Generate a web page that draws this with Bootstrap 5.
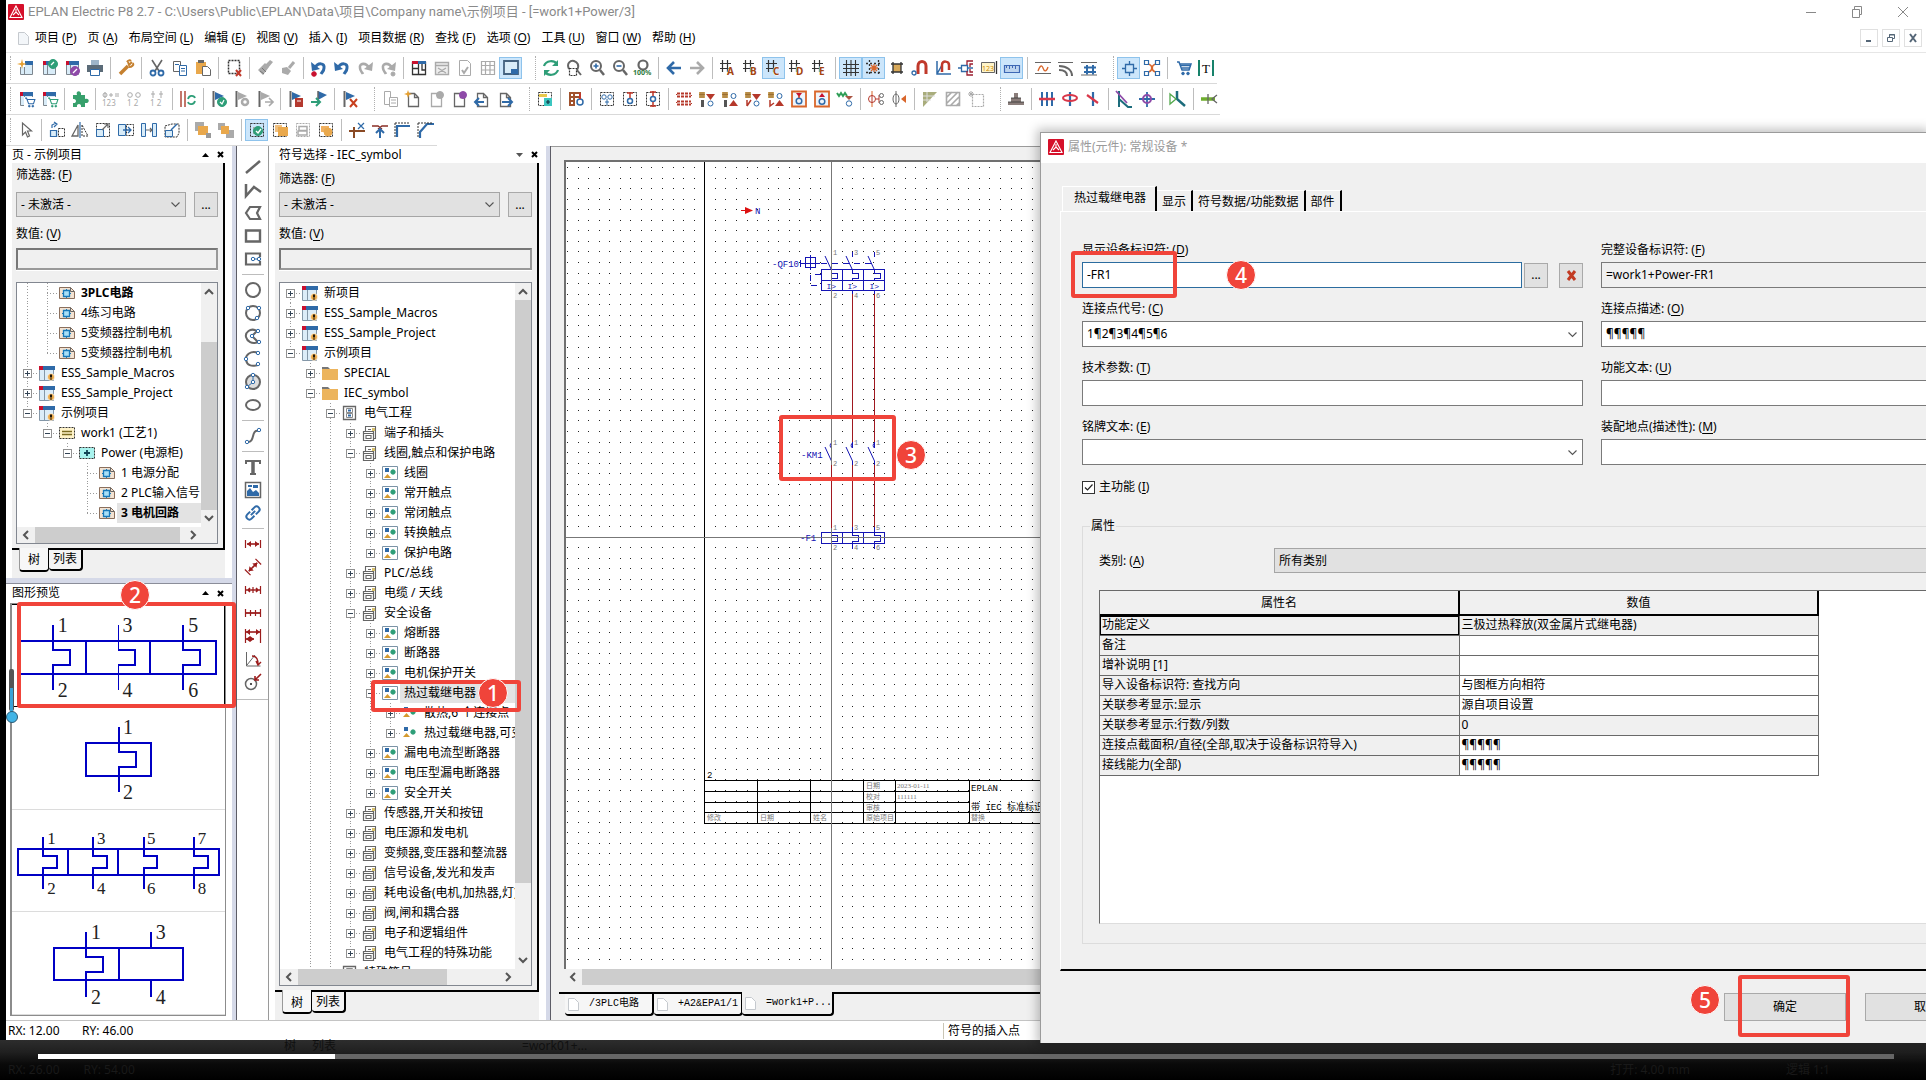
<!DOCTYPE html>
<html lang="zh-CN">
<head>
<meta charset="utf-8">
<meta name="viewport" content="width=device-width, initial-scale=1">
<title>EPLAN Electric P8 2.7</title>
<link href="https://cdn.jsdelivr.net/npm/bootstrap@5.3.0/dist/css/bootstrap.min.css" rel="stylesheet">
<style>
:root{--ui:#f0f0f0;--edge:#7a7a7a;--split:#d5d9e8;--anno:#f0443a}
body{background:#000;color:#000;font:12px/16px "Noto Sans","Noto Sans CJK SC",sans-serif;height:100vh;overflow:hidden}
u{text-underline-offset:2px}
svg{display:block;flex:none}
.app{background:#fff;margin-left:6px;min-height:0}
.titlebar{height:24px;padding-left:2px;color:#8a8a8a;font-size:13px;font-family:Roboto,"Noto Sans CJK SC",sans-serif}
.win-ctl{width:46px;height:20px;border:0;background:none;padding:0}
.menubar{height:29px;border-bottom:1px solid #e6e6e6;padding-left:10px}
.menubar a{color:#000;text-decoration:none;margin-right:11px;white-space:nowrap}
.mdi{width:18px;height:18px;border:1px solid #e0e0e0;background:#fff;padding:0}
.tools{height:31px;border-bottom:1px solid #d9d9d9;align-self:flex-start}
.grip{width:8px;height:24px;border-left:1px dotted #b0b0b0;margin-left:4px;margin-right:-4px}
.grip-next{margin-left:13px;margin-right:-4px}
.sep{width:8px;flex:none;display:flex;justify-content:center}
.sep::before{content:"";width:1px;height:22px;background:#bdbdbd}
.tool{width:23px;height:22px;border:1px solid transparent;background:none;padding:0;display:flex;align-items:center;justify-content:center;flex:none}
.tool svg{overflow:visible}
.tool.on{background:#cce6fb;border-color:#8ec3ec}
.dock-left{width:226px;flex:none}
.dock-mid{width:277px;flex:none;background:#fff}
.dock-top{flex:432 1 0;min-height:0}
.dock-low{flex:437 1 0;min-height:0}
.vsplit{width:5px;background:var(--split);border-right:1px solid #5c5c66;flex:none}
.hsplit{height:6px;background:var(--split);border-bottom:1px solid #8b8d99;flex:none}
.dock-head{height:17px;padding:0 4px 0 6px;white-space:nowrap}
.dock-head button{border:0;background:none;padding:0;width:15px;height:14px;display:flex;align-items:center;justify-content:center}
.dock-body{background:var(--ui);margin:0 7px 0 6px;border-right:2px solid #000;border-bottom:2px solid #000;padding:4px 5px 4px 4px;min-height:0}
.dock-mid .dock-body{padding-top:8px}
.dock-mid .filter-label{margin-bottom:5px}
.filter-label{margin-bottom:9px}
.value-label{margin:9px 0 6px}
.flat-select{height:25px;border:1px solid #a5a5a5;border-radius:0;background-color:#e1e1e1;font-size:12px;line-height:16px;padding:3px 20px 3px 4px;color:#000;background-position:right 4px center;background-size:11px;
 --bs-form-select-bg-img:url("data:image/svg+xml,%3csvg xmlns='http://www.w3.org/2000/svg' viewBox='0 0 11 11'%3e%3cpath d='M1.500 3.500 5.500 7.500 9.500 3.500' fill='none' stroke='%23555' stroke-width='1.100'/%3e%3c/svg%3e")}
.flat-btn{border:1px solid #a9a9a9;background:#e1e1e1;border-radius:0;padding:0;font-size:12px;line-height:16px;color:#000}
.dots-btn{width:24px;height:25px;flex:none}
.flat-input{border:1px solid var(--edge);border-radius:0;font-size:12px;line-height:16px;padding:0 4px 2px;color:#000;background:#fff;width:100%;min-width:0;display:block}
.sunken{height:22px;background:var(--ui);border:2px solid #777;border-right-color:#999;border-bottom-color:#999;box-shadow:0 1px #fff}
.tree-box{margin-top:12px;border:1px solid #828790;background:#fff;min-height:0;overflow:hidden}
.tree{overflow:hidden;min-width:0;min-height:0}
.tree ul{height:0}
.node{height:20px;white-space:nowrap}
.cell{width:20px;height:20px;flex:none}
.node-text{padding:0 4px;line-height:20px}
.node-text.sel{background:#e3e3e3;flex:1}
.vbar,.hbar{background:var(--ui);flex:none}
.vbar{width:16px}.hbar{height:16px}
.arrow-v{height:17px}.arrow-h{width:18px}
.thumb{background:#cdcdcd}
.dock-tabs{height:28px;background:var(--ui);margin:0 7px 0 6px;padding-left:7px}
.dock-tabs button{border:0;background:#f4f4f4;padding:0 4px;font-size:12px;border-right:2px solid #000;border-bottom:2px solid #000;border-radius:0 0 4px 4px;height:21px}
.dock-tabs button.cur{height:24px;width:30px;border-right-width:1px;border-left:1px solid #999;margin-top:-2px;background:#f7f7f7;padding-top:3px}
.strip{width:32px;border-right:1px solid #9a9a9a;flex:none;background:#fff}
.strip .tools-v{border-bottom:1px solid #bdbdbd;padding-top:9px;padding-bottom:6px}
.strip .tool{height:23px}
.strip .sep{width:24px;height:8px;align-items:center}
.strip .sep::before{width:22px;height:1px}
.symbols{border:1px solid #8c8c8c;border-left-width:2px;margin:0 6px 4px 4px;background:#fff;min-height:0}
.symbols li{flex:1;border-bottom:1px solid #dcdcdc;min-height:0}
.symbols li:first-child{border:1px solid #000;border-left:0}
.symbols svg{width:100%;height:100%}
.editor{background:var(--ui);border-top:1px solid #9a9a9a;min-width:0;padding:13px 0 0 13px}
.sheet{border-left:2px solid #707070;border-top:2px solid #707070;background:#fff;min-height:0}
.sheet svg{width:100%;height:100%}
.doc-tabs{height:28px;border-top:2px solid #000;margin-left:-5px;padding-left:6px;margin-top:7px;font-family:"Liberation Mono","Noto Sans CJK SC",monospace;font-size:10px}
.doc-tabs button{border:0;border-right:2px solid #000;border-bottom:2px solid #000;border-radius:0 0 4px 4px;background:#f6f6f6;height:22px;width:89px;padding:0 0 0 1px;font:inherit;color:#000;white-space:nowrap}
.doc-tabs button.cur{height:24px;width:92px;margin-top:-2px;margin-left:-1px;background:var(--ui)}
.status{height:20px;border-top:1px solid #c4c4c4;padding-left:2px}
.status .coord{width:74px}
.status .hint{border-left:1px solid #c9c5b5;padding-left:4px;margin-left:787px}
.dialog-win{position:absolute;left:1040px;right:0;top:132px;height:911px;background:var(--ui);border:1px solid #9b9b9b;border-right:0;border-bottom:0;overflow:hidden;box-shadow:0 0 10px 3px rgba(0,0,0,.25);z-index:5}
.dialog-full{width:calc(100% + 150px);height:100%}
.dlg-title{height:30px;background:#fff;color:#9a9a9a;padding:0 0 3px 7px}
.dlg-tabs{height:48px;padding-left:21px}
.dlg-tabs button{border:0;border-top:1px solid #fff;border-right:2px solid #000;background:none;padding:2px 5px 0;height:21px;font-size:12px;line-height:16px}
.dlg-tabs button.cur{height:25px;padding:0 9px 2px 11px;border-left:1px solid #fff}
.tab-page{margin-left:19px;border-left:1px solid #fff;border-top:1px solid #fff;border-bottom:2px solid #000;padding:26px 20px 25px 21px;min-height:0}
.col-a{width:501px;flex:none}
.field{margin-bottom:9px}
.field label{display:block;line-height:20px;padding-top:2px;margin-bottom:2px}
.field .flat-input,.field .flat-select{height:26px;background-color:#fff;border-color:var(--edge)}
.field .flat-input[readonly]{background:var(--ui)}
.field .flat-input.hot{border-color:#2b6c9f}
.tick{width:13px;height:13px;margin:0;border:1px solid #333;border-radius:0;appearance:none;background:#fff url("data:image/svg+xml,%3csvg xmlns='http://www.w3.org/2000/svg' viewBox='0 0 11 11'%3e%3cpath d='M2 5.500 4.500 8 9.500 2.500' fill='none' stroke='%23222' stroke-width='1.200'/%3e%3c/svg%3e") center}
.main-fn{padding-top:5px}
.props{border:1px solid #dcdcdc;padding:14px 18px 19px 16px;margin-top:23px;min-height:0;min-width:0}
.props legend{float:none;width:auto;font-size:12px;line-height:16px;margin:0 0 0 -9px;padding:0 1px}
.props-in{height:100%}
.cat-label{width:175px}
.grid-box{margin-top:17px;border:1px solid #696969;border-right-color:#ddd;border-bottom-color:#ddd;background:#fff;min-height:0}
.grid-table{width:719px;table-layout:fixed;border-collapse:collapse;line-height:16px}
.grid-table th{background:var(--ui);font-weight:400;text-align:center;height:24px;border-right:2px solid #000;border-bottom:2px solid #000;padding:0}
.grid-table td{height:20px;padding:0 2px;border:1px solid #696969;border-left:0;white-space:nowrap}
.grid-table .ro{background:var(--ui)}
.grid-table td.focus{box-shadow:inset 0 0 0 1px #000}
.dlg-foot{height:72px;padding:22px 0 0 683px}
.dlg-foot .flat-btn{width:122px;height:28px;margin-right:19px}
.player{height:40px;background:linear-gradient(#2d2d2d,#202020 12px,#0a0a0a 24px,#000);position:relative;color:#0e0e0e}
.player-track{height:5px;background:#666;margin:0 32px 0 38px}
.player-track .played{width:16%;height:5px;background:#fff}
.ghost-top{height:14px;padding-left:284px;color:#101010;line-height:12px}
.ghost-low{height:20px;padding:3px 0 0 8px;color:#191919}
.anno-box{position:absolute;border:4px solid var(--anno);border-radius:3px;z-index:8}
.anno-num{position:absolute;width:30px;height:30px;border-radius:50%;background:var(--anno);color:#fff;border:1px solid #fff;font-size:21px;line-height:28px;font-weight:500;text-align:center;z-index:9}
.b1{left:371px;top:680px;width:150px;height:32px}.n1{left:478px;top:678px}
.b2{left:17px;top:602px;width:219px;height:106px}.n2{left:120px;top:580px}
.b3{left:779px;top:415px;width:117px;height:66px}.n3{left:896px;top:440px}
.b4{left:1071px;top:251px;width:106px;height:47px}.n4{left:1226px;top:260px}
.b5{left:1738px;top:975px;width:112px;height:62px}.n5{left:1690px;top:985px}
.gauge{position:absolute;left:5px;top:668px;z-index:9}
</style>
</head>
<body class="d-flex flex-column">
<div class="app d-flex flex-column flex-grow-1">
 <header class="d-flex flex-column">
  <div class="titlebar d-flex align-items-center">
   <svg width="16" height="16" viewBox="0 0 16 16"><rect width="16" height="16" rx="1" fill="#d5102a"/><path d="M8 2 14 13.500H2zM8 5v4M5 11l3-3 3 3" fill="none" stroke="#fff" stroke-width="1.100"/></svg>
   <span class="ms-1 flex-grow-1">EPLAN Electric P8 2.7 - C:\Users\Public\EPLAN\Data\项目\Company name\示例项目 - [=work1+Power/3]</span>
   <button class="win-ctl" aria-label="最小化"><svg class="mx-auto" width="12" height="12"><path d="M1 6.500h10" stroke="#888"/></svg></button>
   <button class="win-ctl" aria-label="还原"><svg class="mx-auto" width="12" height="12" fill="none" stroke="#888"><path d="M1.500 3.500h7v8h-7zM3.500 3V.5h7v8H9"/></svg></button>
   <button class="win-ctl" aria-label="关闭"><svg class="mx-auto" width="12" height="12"><path d="m1 1 10 10M11 1 1 11" stroke="#888"/></svg></button>
  </div>
  <nav class="menubar d-flex align-items-center">
   <svg class="me-1" width="15" height="15" viewBox="0 0 15 15"><path d="M2.500 1.500h6l4 4v8h-10z" fill="#f3f6f9" stroke="#c5c9ce"/></svg>
   <a href="#">项目 (<u>P</u>)</a><a href="#">页 (<u>A</u>)</a><a href="#">布局空间 (<u>L</u>)</a><a href="#">编辑 (<u>E</u>)</a><a href="#">视图 (<u>V</u>)</a><a href="#">插入 (<u>I</u>)</a><a href="#">项目数据 (<u>R</u>)</a><a href="#">查找 (<u>F</u>)</a><a href="#">选项 (<u>O</u>)</a><a href="#">工具 (<u>U</u>)</a><a href="#">窗口 (<u>W</u>)</a><a href="#">帮助 (<u>H</u>)</a>
   <div class="ms-auto d-flex gap-1 me-1">
    <button class="mdi" aria-label="最小化文档"><svg class="mx-auto" width="10" height="10"><path d="M2 8h5" stroke="#567" stroke-width="2"/></svg></button>
    <button class="mdi" aria-label="还原文档"><svg class="mx-auto" width="10" height="10" fill="none" stroke="#567"><path d="M1.500 4.500h5v4h-5zM3.500 4V1.500h5v4H7M3 2h6"/></svg></button>
    <button class="mdi" aria-label="关闭文档"><svg class="mx-auto" width="10" height="10"><path d="m2 1 6 8M8 1 2 9" stroke="#567" stroke-width="2"/></svg></button>
   </div>
  </nav>
  <div class="tools d-flex align-items-center" data-bar="new open close print | wrench | cut copy paste | delsel | brush brush2 | undoX undo redo redoX | nav1 nav2! check tbl frame* ~ refresh zoomwin zoomin zoomout zoom100 | left right | gridA gridB gridC* gridD gridE | gridv* snap* objsnap magnet logic conn n123 ruler* | wave arcs dots4 ~ chip* net | cart txt"></div>
  <div class="tools d-flex align-items-center" data-bar="wcart wcart2 | puzzle | num1 num2 num3 | sync | flagok flaggear flagnext | flagbox flagto | flagx ~ pgcopy pgnew pggray pgvio pgin pgout ~ macro | gridred | selo seld selm | redgrid trA trB trC trD boxD boxU wavT | dev1 dev2 | tri hatch seldot ~ term | bars3 oval slash | knife node | angle | cross"></div>
  <div class="tools d-flex align-items-center" data-bar="cursor | move mirror scale copyr stretch resize | toback tofront | groupon* group ungroup grp2 | cutline addpt corner chamf"></div>
 </header>

 <main class="d-flex flex-grow-1" style="min-height:0">
  <aside class="dock-left d-flex flex-column">
   <section class="dock-top d-flex flex-column">
    <div class="dock-head d-flex align-items-center"><span class="flex-grow-1">页 - 示例项目</span><button aria-label="收起"><svg width="7" height="4"><path d="M0 4h7L3.500 0z"/></svg></button><button aria-label="关闭"><svg width="7" height="7"><path d="m1 1 5 5M6 1 1 6" stroke="#000" stroke-width="2"/></svg></button></div>
    <div class="dock-body d-flex flex-column flex-grow-1">
     <label class="filter-label" for="f1">筛选器: (<u>F</u>)</label>
     <div class="d-flex justify-content-between gap-2"><select class="form-select flat-select" id="f1"><option>- 未激活 -</option></select><button class="flat-btn dots-btn">...</button></div>
     <label class="value-label" for="v1">数值: (<u>V</u>)</label>
     <input class="flat-input sunken flex-shrink-0" id="v1">
     <div class="tree-box d-flex flex-column flex-grow-1">
      <div class="d-flex flex-grow-1" style="min-height:0"><div class="tree flex-grow-1"><ul class="list-unstyled m-0" id="pages"></ul></div>
       <div class="vbar d-flex flex-column"><svg class="arrow-v" width="16" height="17"><path d="m4 11 4-4 4 4" fill="none" stroke="#555" stroke-width="2"/></svg><div style="flex:42"></div><div class="thumb" style="flex:170"></div><svg class="arrow-v" width="16" height="17"><path d="m4 6 4 4 4-4" fill="none" stroke="#555" stroke-width="2"/></svg></div></div>
      <div class="hbar d-flex"><svg class="arrow-h" width="18" height="16"><path d="m11 4-4 4 4 4" fill="none" stroke="#555" stroke-width="2"/></svg><div class="thumb" style="flex:146"></div><svg class="arrow-h" width="26" height="16"><path d="m11 4 4 4-4 4" fill="none" stroke="#555" stroke-width="2"/></svg><div style="width:19px"></div></div>
     </div>
    </div>
    <div class="dock-tabs d-flex align-items-start"><button class="cur">树</button><button>列表</button></div>
   </section>
   <div class="hsplit"></div>
   <section class="dock-low d-flex flex-column">
    <div class="dock-head d-flex align-items-center" style="flex:0 0 19px"><span class="flex-grow-1">图形预览</span><button aria-label="收起"><svg width="7" height="4"><path d="M0 4h7L3.500 0z"/></svg></button><button aria-label="关闭"><svg width="7" height="7"><path d="m1 1 5 5M6 1 1 6" stroke="#000" stroke-width="2"/></svg></button></div>
    <ul class="symbols list-unstyled d-flex flex-column flex-grow-1" id="symbols"></ul>
   </section>
  </aside>
  <div class="vsplit"></div>
  <div class="strip"><div class="tools-v d-flex flex-column align-items-center" data-bar="line poly pgon rect rectc | circ circ3 arc1 arc2 pie ell | spline | T img link | dim1 dim2 dim3 dim4 dim5 dimA dimR"></div></div>

  <aside class="dock-mid d-flex flex-column">
   <div class="dock-head d-flex align-items-center"><span class="flex-grow-1 ms-1">符号选择 - IEC_symbol</span><button aria-label="菜单"><svg width="7" height="4"><path d="M0 0h7L3.500 4z" fill="#555"/></svg></button><button aria-label="关闭"><svg width="7" height="7"><path d="m1 1 5 5M6 1 1 6" stroke="#000" stroke-width="2"/></svg></button></div>
   <div class="dock-body d-flex flex-column flex-grow-1">
    <label class="filter-label" for="f2">筛选器: (<u>F</u>)</label>
    <div class="d-flex gap-2"><select class="form-select flat-select" id="f2"><option>- 未激活 -</option></select><button class="flat-btn dots-btn">...</button></div>
    <label class="value-label" for="v2">数值: (<u>V</u>)</label>
    <input class="flat-input sunken flex-shrink-0" id="v2">
    <div class="tree-box d-flex flex-column flex-grow-1">
     <div class="d-flex flex-grow-1" style="min-height:0"><div class="tree flex-grow-1"><ul class="list-unstyled m-0" id="syms"></ul></div>
      <div class="vbar d-flex flex-column"><svg class="arrow-v" width="16" height="17"><path d="m4 11 4-4 4 4" fill="none" stroke="#555" stroke-width="2"/></svg><div class="thumb" style="flex:585"></div><div style="flex:69"></div><svg class="arrow-v" width="16" height="17"><path d="m4 6 4 4 4-4" fill="none" stroke="#555" stroke-width="2"/></svg></div></div>
     <div class="hbar d-flex"><svg class="arrow-h" width="18" height="16"><path d="m11 4-4 4 4 4" fill="none" stroke="#555" stroke-width="2"/></svg><div class="thumb" style="flex:149"></div><div style="flex:50"></div><svg class="arrow-h" width="26" height="16"><path d="m9 4 4 4-4 4" fill="none" stroke="#555" stroke-width="2"/></svg><div style="width:16px"></div></div>
    </div>
   </div>
   <div class="dock-tabs d-flex align-items-start"><button class="cur">树</button><button>列表</button></div>
  </aside>
  <div class="vsplit"></div>

  <section class="editor d-flex flex-column flex-grow-1">
   <div class="sheet flex-grow-1"><svg id="drawing" role="img" aria-label="电机回路"></svg></div>
   <div class="hbar d-flex"><svg class="arrow-h" width="18" height="16"><path d="m11 4-4 4 4 4" fill="none" stroke="#555" stroke-width="2"/></svg><div class="thumb flex-grow-1"></div></div>
   <div class="doc-tabs d-flex align-items-start" id="docs"></div>
  </section>
 </main>
 <footer class="status d-flex align-items-center"><span class="coord">RX: 12.00</span><span class="coord">RY: 46.00</span><span class="hint">符号的插入点</span></footer>
</div>

<div class="player">
 <div class="ghost-top d-flex gap-3"><span>树</span><span>列表</span><span style="margin-left:170px">=work01+...</span></div>
 <div class="player-track"><div class="played"></div></div>
 <div class="ghost-low d-flex"><span>RX: 26.00</span><span class="ms-4 flex-grow-1">RY: 54.00</span><span class="me-5">打开: 4.00 mm</span><span class="ms-5 me-5 pe-5">逻辑 1:1</span></div>
</div>

<div class="dialog-win" role="dialog" aria-label="属性">
 <div class="dialog-full d-flex flex-column">
  <div class="dlg-title d-flex align-items-center flex-shrink-0"><svg width="16" height="16" viewBox="0 0 16 16"><rect width="16" height="16" rx="1" fill="#d5102a"/><path d="M8 2 14 13.500H2zM8 5v4M5 11l3-3 3 3" fill="none" stroke="#fff" stroke-width="1.100"/></svg><span class="ms-1">属性(元件): 常规设备 *</span></div>
  <div class="dlg-tabs d-flex align-items-end flex-shrink-0"><button class="cur">热过载继电器</button><button>显示</button><button>符号数据/功能数据</button><button>部件</button></div>
  <div class="tab-page d-flex flex-column flex-grow-1">
   <div class="d-flex" style="gap:18px">
    <div class="col-a">
     <div class="field"><label for="d1">显示设备标识符: (<u>D</u>)</label><div class="d-flex align-items-center"><input class="flat-input hot" id="d1" value="-FR1"><button class="flat-btn dots-btn" style="margin:0 11px 0 2px">...</button><button class="flat-btn dots-btn" aria-label="删除"><svg class="mx-auto" width="11" height="11"><path d="m2 1 7 9M9 1 2 10" stroke="#c23a22" stroke-width="3"/></svg></button></div></div>
     <div class="field"><label for="d2">连接点代号: (<u>C</u>)</label><select class="form-select flat-select" id="d2"><option>1¶2¶3¶4¶5¶6</option></select></div>
     <div class="field"><label for="d3">技术参数: (<u>T</u>)</label><input class="flat-input" id="d3"></div>
     <div class="field"><label for="d4">铭牌文本: (<u>E</u>)</label><select class="form-select flat-select" id="d4"><option></option></select></div>
    </div>
    <div class="flex-grow-1">
     <div class="field"><label for="e1">完整设备标识符: (<u>F</u>)</label><input class="flat-input" id="e1" readonly value="=work1+Power-FR1"></div>
     <div class="field"><label for="e2">连接点描述: (<u>O</u>)</label><input class="flat-input" id="e2" value="¶¶¶¶¶"></div>
     <div class="field"><label for="e3">功能文本: (<u>U</u>)</label><input class="flat-input" id="e3"></div>
     <div class="field"><label for="e4">装配地点(描述性): (<u>M</u>)</label><input class="flat-input" id="e4"></div>
    </div>
   </div>
   <div class="main-fn d-flex align-items-center gap-1"><input class="tick" type="checkbox" id="mf" checked><label for="mf">主功能 (<u>I</u>)</label></div>
   <fieldset class="props flex-grow-1"><legend>属性</legend>
    <div class="props-in d-flex flex-column">
     <div class="d-flex align-items-center"><label class="cat-label flex-shrink-0" for="cat">类别: (<u>A</u>)</label><select class="form-select flat-select" id="cat"><option>所有类别</option></select></div>
     <div class="grid-box flex-grow-1">
      <table class="grid-table"><thead><tr><th>属性名</th><th>数值</th></tr></thead><tbody>
       <tr><td class="ro focus">功能定义</td><td class="ro">三极过热释放(双金属片式继电器)</td></tr>
       <tr><td class="ro">备注</td><td></td></tr>
       <tr><td class="ro">增补说明 [1]</td><td></td></tr>
       <tr><td class="ro">导入设备标识符: 查找方向</td><td>与图框方向相符</td></tr>
       <tr><td class="ro">关联参考显示:显示</td><td>源自项目设置</td></tr>
       <tr><td class="ro">关联参考显示:行数/列数</td><td class="ro">0</td></tr>
       <tr><td class="ro">连接点截面积/直径(全部,取决于设备标识符导入)</td><td>¶¶¶¶¶</td></tr>
       <tr><td class="ro">接线能力(全部)</td><td>¶¶¶¶¶</td></tr>
      </tbody></table>
     </div>
    </div>
   </fieldset>
  </div>
  <div class="dlg-foot d-flex align-items-start flex-shrink-0"><button class="flat-btn">确定</button><button class="flat-btn">取消</button></div>
 </div>
</div>

<div class="anno-box b1"></div><div class="anno-num n1">1</div>
<div class="anno-box b2"></div><div class="anno-num n2">2</div>
<div class="anno-box b3"></div><div class="anno-num n3">3</div>
<div class="anno-box b4"></div><div class="anno-num n4">4</div>
<div class="anno-box b5"></div><div class="anno-num n5">5</div>
<svg class="gauge" width="14" height="58"><rect x="4" y="1" width="5" height="42" rx="2" fill="#555"/><rect x="5" y="20" width="3" height="26" fill="#3aa3d8"/><circle cx="7" cy="49" r="5.500" fill="#41b4e6" stroke="#2c5a73"/></svg>

<script src="https://cdn.jsdelivr.net/npm/bootstrap@5.3.0/dist/js/bootstrap.bundle.min.js"></script>
<script>
const G='#666',L='#aaa',B='#2f6aa8',R='#c0392b',O='#e9a84c',E='#2e9e78',K='#333',P='#8e4aa8',S='#d9ecf8';
const p=(d,s=G,w=1,f='none',x='')=>`<path d="${d}" fill="${f}" stroke="${s}" stroke-width="${w}" ${x}/>`;
const f=(d,c)=>`<path d="${d}" fill="${c}"/>`;
const c=(x,y,r,s=G,w=1,fl='none')=>`<circle cx="${x}" cy="${y}" r="${r}" stroke="${s}" stroke-width="${w}" fill="${fl}"/>`;
const D='stroke-dasharray="2 1"';
/* project window whose top-left corner is left free for an overlay */
const win=f('M3 3h12v12H3z',S)+p('M3.500 5v10.500h12V4M7.500 6v9','#7d868e')+f('M3 2h13v4H3z',B)+f('M3 2h3v4H3z','#c8102e');
const ball=k=>c(12,12,4.500,k,1,k)+p('m10 12 2 2 2-4','#fff',1.200);
const flag=k=>p('M3.500 1v16',G,2)+f('M5 2l9 4-9 4z',k);
const page=k=>p('M4.500 3.500h6l4 4v9h-10zM10.500 3.500v4h4',k,1.300,'#fff');
const letter=t=>p('M1 4.500h11M1 9.500h10M3.500 1v12M8.500 1v12',K,1.200)+`<text x="8" y="16" font-size="10" font-weight="700" fill="#a34510" stroke="#fff" stroke-width="1" paint-order="stroke">${t}</text>`;
const mag=c(8,7,5,G,2)+p('m12 11 4 5',G,2.500);
const cartp=(k)=>p('M3 3h2l3 8h7l2-6H6',k,1.500)+c(9,14.500,1.300,k,1,k)+c(14,14.500,1.300,k,1,k);
const tr=(a,b)=>f('M1 2h6v6H1z','#c9a25c')+p('M3 2v6M5 2v6M1 4.500h6','#8a5a20',.6)+a+b;
const dim=x=>p('M1.500 5v8M16.500 5v8'+x,'#9b1c1c',1.200);
const har=(a,b,y)=>p(`M${a} ${y}H${b}`,'#9b1c1c',1.600)+f(`M${a} ${y}l4-3v6zM${b} ${y}l-4-3v6z`,'#9b1c1c');
const cn=(x,y)=>c(x,y,1.700,B,1,'#fff');
const sel=p('M2.500 2.500h13v13h-13z',K,1,'none',D);
const I={
new:win+f('M0 0h8v8H0z','#fff')+f('M5 0l1 4 4 1-4 1-1 4-1-4-4-1 4-1z','#e6a030'),
open:win+c(13,5,4.500,E,1,E)+p('m11 6 3-3',"#fff",1.300),close:win+c(12,12,4.500,P,1,P)+p('m10 14 4-4','#fff',1.300),
print:f('M5 1h8v5H5z','#9db4c8')+f('M1 6h16v7H1z','#5b6b78')+p('M4.500 10.500h9v6h-9z',B,1,'#fff'),
wrench:p('M3 15 11 7',"#c5802f",3.500)+p('M15 3l-3 3-1-3M10 3c1-2 3-2 4-1m2 2c1 2-1 4-4 4','#c5802f',2),
cut:p('M4 1l7 11M14 1 7 12',G,1.600)+c(5,14,2.500,B,1.800)+c(13,14,2.500,B,1.800),
copy:p('M2.500 2.500h7v10h-7z',G,1,'#fff')+p('M8.500 6.500h7v10h-7zM10 9.500h4M10 12h4M4 5.500h4',B,1,'#fff'),
paste:f('M2 3h10v12H2z',O)+f('M4 1h6v3H4z',G)+p('M8.500 7.500h5l3 3v6h-8z',G,1,'#fff'),
delsel:p('M3.500 1.500h11v13h-11z',K,1.500,'none',D)+p('m11 11 5 6m0-6-5 6',R,2),
brush:f('M2 11 9 4l4 4-6 8zM9 6l5-5 3 2-5 6z',L)+p('M4 12l4 3M6 9l4 4','#777',1),brush2:f('M3 9l5-1 4 4-3 4-6-2z',L)+p('m10 9 5-6',L,3),
undo:p('M5 9C8 3 15 4 14 9c0 3-2 4-3 6',B,3)+f('M1 3l1 9 8-2z',B),
redo:p('M13 9C10 3 3 4 4 9c0 3 2 4 3 6',L,2.600)+f('M17 3l-1 9-8-2z',L),
nav1:p('M2.500 3.500h13v12h-13zM8.500 3v12M2 9.500h6M12 4v7h3',K,1.300,'#fff')+f('M2 2h6v3H2z','#c8102e')+f('M8 2h8v3H8z',B),
nav2:p('M2.500 3.500h13v12h-13zM3 6.500h12M5 9l8 5m0-5-8 5',L,1.400,'#eee'),check:p('M3.500 1.500h8l3 3v12h-11z',L)+p('m6 11 2 3 4-6',L,2),
tbl:p('M2.500 2.500h13v13h-13zM2 6.500h13M2 11h13M6.500 2v13M11 2v13',L,1.200),frame:p('M2 2h14v13H2z','#44627f',1.800,S)+f('M9 10h7v5H9z',B),
refresh:p('M2 7c2-6 10-6 13-2M16 11c-2 6-10 6-13 2',E,2.200)+f('M16 1v6h-6zM2 17v-6h6z',E),zoomwin:p('M4 10C1 4 6 1 9 2s6 4 3 9l4 5',G,2)+p('M4.500 9.500h7v7h-7z',K,1.200,'#fff',D),
zoomin:mag+p('M5.500 7h5M8 4.500v5',B,1.600),zoomout:mag+p('M5.500 7h5',B,1.600),zoom100:c(9,6,4.500,G,2.200)+`<text x="-1" y="16" font-size="7" font-weight="700" fill="#2d7a40">100%</text>`,
left:p('M4 9h12M9 3 3 9l6 6',B,2.600),right:p('M2 9h12M9 3l6 6-6 6',L,2.600),
gridA:letter('A'),gridB:letter('B'),gridC:letter('C'),gridD:letter('D'),gridE:letter('E'),
gridv:p('M1 5.500h16M1 9.500h16M1 13.500h16M4.500 1v16M9 1v16M13.500 1v16',K,1.100),snap:p('M1 4.500h16M1 13.500h16M4.500 1v16M13.500 1v16',K,1.300,'none','stroke-dasharray="2 2"')+p('M5 9h8M9 5v8M6 6l6 6m0-6-6 6','#d9662b',1.300),
objsnap:f('M5 5h8v8H5z','#d8a95a')+p('M3 5h12M3 13h12M5 3v12M13 3v12',K,1.300),magnet:p('M7 15V7c0-6 8-6 8 0v8',R,3)+c(3,14,2,B,1.300),
logic:p('M3 2v13h14M3 15 8 6',B,1.500)+p('M8 13V6c0-5 7-4 7 0v5',R,2.500),conn:p('M4.500 6.500h6v6h-6zM1 9h3M10 9h6',B,1.300)+p('M16 2h-6v4M16 5h-3v3M16 16h-6v-4M16 13h-3v-3','#9b1c2e',1.300),
n123:p('M1.500 3.500h13v10h-13z',G,1,'#fff4c8')+`<text x="2" y="12" font-size="7" fill="#c80">123</text>`+p('M16.500 2v13',K,1.300),ruler:p('M1.500 6.500h15v7h-15z','#3d68b5',1.200,'#bcd4ee')+p('M3.500 7v2M6.500 7v3M9.500 7v2M12.500 7v3','#3d68b5'),
wave:p('M1 3.500h16M1 14.500h16',G,1)+p('M4 12c2-6 4-6 5-3s3 5 5-1','#d9662b',1.300),arcs:p('M1 3.500h15',G,1)+p('M2 7c8 0 13 4 13 10M2 11c5 0 8 2 8 6',G,2),dots4:p('M1 3.500h16M1 16h16',G)+p('M4 8.500h12M4 13h12M7 6v9.500M13 6v9.500',B,2),
chip:p('M5.500 5.500h8v8h-8zM9.500 2v3M9.500 14v3M2 9.500h3M14 9.500h3',B,1.300),net:p('M5 5c5 1 5 7 0 8M13 5c-5 1-5 7 0 8','#d9662b',1.600)+p('M1.500 1.500h4v4h-4zM12.500 1.500h4v4h-4zM1.500 12.500h4v4h-4zM12.500 12.500h4v4h-4z',B,1.200,'#fff'),
cart:cartp(B)+p('M7 6.500h10M8 9h8',B,1.500),txt:p('M2 1v16M16 1v16','#17826b',2)+`<text x="9" y="14" text-anchor="middle" font-family="Liberation Serif" font-size="13">T</text>`,
wcart:win+f('M7 7h11v11H7z','#fff')+'<g transform="translate(6 6) scale(.7)">'+cartp(B)+'</g>',wcart2:win+f('M7 7h11v11H7z','#fff')+'<g transform="translate(6 6) scale(.7)">'+cartp(E)+'</g>',
puzzle:f('M2 5h4c-2-5 5-5 4 0h4v4c5-2 5 5 0 4v4h-4c1-4-5-4-4 0H2v-4c4 1 4-5 0-4z','#37a06c'),
num1:c(3,5,2,L)+p('M7 5h4M9 3v4M3 2v6M13 4h4M13 6h4',L)+`<text x="0" y="16" font-size="8" fill="${L}">123</text>`,num2:c(5,5,2.300,L)+c(13,5,2.300,L)+`<text x="2" y="16" font-size="8" fill="${L}">1 2</text>`,num3:p('M5 1v7M13 1v7M3 4h4M11 4h4',L)+`<text x="2" y="16" font-size="8" fill="${L}">1 2</text>`,
sync:p('M2 1v16M6 1v16','#b04a3a',1.500)+p('M9 9c1-4 6-4 7-1M16 11c-1 4-6 4-7 1',E,1.800),
flagok:flag(B)+ball(E),flaggear:flag(L)+c(12,12,3,L,2.500),flagnext:flag(L)+p('M9 12h7M13 8l4 4-4 4',L,1.700),flagbox:flag(B)+f('M8 8h8v9H8z','#b4392f')+p('M10 11h4',"#fff"),flagto:f('M8 1l9 4-9 5z',B)+p('M8 1v10',G,1.500)+p('M1 12h8M6 8l4 4-4 4',E,2),flagx:flag(B)+p('m9 9 7 8m0-8-7 8','#c8401e',2),
pgcopy:p('M3.500 1.500h6v13h-6z',L)+p('M8.500 7.500h8v9h-8zM10 10h5M10 13h5',L,1,'#fff'),pgnew:page(G)+f('M4 0l1 3 3 1-3 1-1 3-1-3-3-1 3-1z','#e6a030'),pggray:page(L)+c(13,5,3.500,L,1,L),pgvio:page(G)+c(13,5,3.500,P,1,P),pgin:page(G)+p('M11 12H2M6 8l-4 4 4 4',B,2),pgout:page(G)+p('M6 12h10M12 8l4 4-4 4',B,2),
macro:sel+f('M3 4h8v3H3z','#e9c84c')+f('M8 8h8v8H8z','#3cc6c0')+p('M10 12h4M12 10v4','#134',1.200),gridred:p('M2 3h12M2 7h12M2 11h6M2 15h6M3 2v13M7 2v13','#a0522d',2)+c(13,12,3,B,1.500,'#fff')+p('M13 3v6',R,2),
selo:sel+c(6,7,2.200,B)+c(12,7,2.200,B)+p('M9 9v6M7 12h4',B),seld:sel+c(9,11,2.500,B,1.500)+p('M9 2v6M6 3h6',R,1.500),selm:sel+c(9,9,2.500,B,1.500)+p('M9 1v5M9 12v5M6 2h6M6 16h6',R,1.500),
redgrid:p('M2 3.500h14M2 6.500h14M2 11.500h14M2 14.500h14','#b5382a',1.800,'none','stroke-dasharray="3 1"')+p('M1 5l2-2M1 13l2-2M15 7l2-2M15 15l2-2','#b5382a'),
trA:tr(f('M8 4h9l-4.500 6z','#b5382a'),c(12.500,13.500,2.500,B)+f('M3 10h3v7H3z','#555')),trB:tr(c(12.500,6,2.500,B),f('M8 16h9l-4.500-6z','#b5382a')+f('M3 10h3v7H3z','#555')),trC:tr(f('M8 4h9l-4.500 6z','#b5382a'),c(12.500,13.500,2.500,B)+p('M3 10v6M3 16l4-6','#b5382a',1.500)),trD:tr(c(12.500,6,2.500,B),f('M8 16h9l-4.500-6z','#b5382a')+p('M3 10v6l4-3','#b5382a',1.500)),
boxD:p('M2 1.500h14v15H2z','#d9662b',1.800,'#eef4fb')+f('M6 3h6l-3 4z','#c8102e')+c(9,11,2.800,B,1.500)+p('M9 5v3',R,1.500),boxU:p('M2 1.500h14v15H2z','#d9662b',1.800,'#eef4fb')+f('M6 7h6L9 3z','#c8102e')+c(9,11.500,2.800,B,1.500),wavT:p('M1 3l2 3 2-3 2 3 2-3 2 3','#2f9e57',2)+f('M9 6h8l-4 4z','#a54')+c(13,13.500,2.700,B),
dev1:p('M5 1v4M5 13v4','#d9662b')+c(5,9,3.500,'#b5382a')+p('M5 5v8M9 9h3M12 5v8',"#b5382a")+c(14.500,5.500,2,G)+c(14.500,12.500,2,G),dev2:'<ellipse cx="6" cy="9" rx="3" ry="5" fill="none" stroke="#666"/>'+p('M6 1v16',G)+f('M16 5v8l-5-4z','#d9662b'),
tri:f('M2 2h14L2 17z','#a9ad7c')+p('M2 6h12M2 10h8M6 2v10','#ddd'),hatch:p('M2.500 2.500h13v13h-13zM2 8l6-6M2 14 14 2M6 16 16 6M12 16l4-4',L,1.600),seldot:p('M5.500 4.500h11v12h-11z',L,1.200,'none',D)+p('M1 4h6M4 1v6M2 2l4 4m0-4-4 4',L),
term:f('M7 3h4v5H7zM4 8h10v4H4zM1 12h16v3H1z','#8a7d7a')+p('M1 12h16M4 8h10',K,.8),
bars3:p('M4 2v14M9 2v14M14 2v14',B,2)+p('M1 9h16','#d9374a',2.500),oval:p('M9 2v14',B,2.200)+'<ellipse cx="9" cy="8" rx="7" ry="3" fill="none" stroke="#d9374a" stroke-width="2"/>',slash:p('M9 2v14',B,2.200)+p('m3 5 11 8','#d9374a',2.200),
knife:p('M4 1v16M4 9l9 8h4',"#1c6c7c",2)+p('m1 1 11 12',P,1.800),node:p('M1 9h16M9 2v15',B,1.800)+c(9,9,4,P,2),angle:p('M8 1v8l8 7',"#1c6c7c",2.500)+p('m1 4 6 5-6 5z','#52a84c',1.300),cross:p('M1 9h14','#6fae2e',3.500)+p('M8 4v10M17 5l-5 4 5 4',G,1.300),
cursor:p('M5.500 2v12l3-3 2 5 2-1-2-5h4z',G,1.200,'#fff'),
move:f('M3 9h7v7H3z',S)+p('M2.500 9.500h6v6h-6zM4 7V4l4-2M6 1l3 2-3 3',B,1.200)+p('M10.500 7.500h6v8h-6z',K,1,'none',D),mirror:p('M9 1v16',B,1.200)+p('M7 4v11H1z',G,1.300)+p('M11 4v11h6z',K,1,'none',D),
scale:p('M2.500 2.500h13v13h-13z',K,1,'none',D)+p('M2.500 8.500h7v7h-7z',B,1,S)+p('m8 9 6-6m0 4V3h-4',G,1.200),copyr:p('M1.500 3.500h7v11h-7z',B,1,S)+p('M9.500 3.500h7v11h-7z',K,1,'none',D)+p('M6 9h8m-3-3 3 3-3 3',B,1.300),stretch:p('M1.500 2.500h4v13h-4zM12.500 2.500h4v13h-4z',B,1,S)+p('M6 9h6m-2-2 2 2-2 2',G,1.200),resize:p('M2 5l7-2h7v9l-2 4H2z',K,1,'none',D)+p('M2.500 9.500h7v6h-7z',B,1,S)+p('m8 9 6-6',B,1.500),
toback:f('M1 1h9v9H1z','#aaa')+f('M4 5h10v9H4z',O)+f('M12 12h5v5h-5z','#999'),tofront:f('M1 2h7v7H1zM9 9h8v8H9z','#aaa')+f('M4 5h8v8H4z',O),
groupon:sel+f('M5 6h8v7H5z','#aaa')+c(10,10,4.500,E,1,E)+p('m8 10 2 2 3-4','#fff',1.400),group:sel+f('M4 4h7v7H4z','#f0c080')+f('M7 6h10v9H7z',O),ungroup:p('M2.500 2.500h13v13h-13z',L,1,'none',D)+p('M5 5.500h8v4H5zM4 10h9v4H4z',L,1.500),grp2:sel+f('M4 5h8v6H4z','#f0b060')+c(11,11,4,O,1,O),
cutline:p('M1 10h16M6 6v11','#8a4a24',2)+p('m10 2 6 6m0-6-6 6',B,1.200),addpt:p('M1 5h6l4 3M17 5h-6L7 8','#8a2e24',1.500)+p('M9 17V8m-4 4 4-4 4 4',B,2),corner:p('M3 16V5h13',B,2.200)+p('M1 2h15M1 2v15',K,1,'none',D),chamf:p('M3 17V11l7-8h7',B,2.200)+p('M1 2h15M1 2v15',K,1,'none',D),
line:p('M2 15 16 3',G,2.500),poly:p('M2 3v12L10 6l7 5',G,2.500),pgon:p('M6 3h10l-3 6 3 6H6L2 9z',G,2.200),rect:p('M2 3.500h14v11H2z',G,2.400),rectc:p('M16 7V3.500H2v11h14V11',G,2.200)+p('M9 9h7',B)+cn(9,9)+cn(15,9),
circ:c(9,9,7,G,2),circ3:c(9,9,7,G,2)+cn(4,4)+cn(15,4)+cn(13,14),arc1:p('M13 4C6 0 1 6 2 10s6 8 12 5M13 4 8 9l6 6',G,2)+cn(14,4)+cn(15,15)+cn(8,9),arc2:p('M14 3C7 0 1 5 2 10s5 7 12 5',G,2)+cn(14,3)+cn(14,14)+cn(2,9),
pie:c(9,9,7,G,2,'#ddd')+p('M9 9V2M9 9l-6 5',B)+cn(9,2)+cn(9,9)+cn(3,14),ell:'<ellipse cx="9" cy="9" rx="7" ry="5" fill="none" stroke="#666" stroke-width="2"/>',spline:p('M3 15C12 16 6 2 15 4',G,2)+cn(3,15)+cn(15,3),
T:p('M2 6V3h14v3M6 16h6',G,2)+p('M9 3v13',G,3.500),img:p('M1.500 1.500h15v15h-15z',G,1.500,'#fff')+f('M3 15v-5l3-3 3 4 3-2 3 3v3z',B)+f('M4 4h4v2H4zM9 4h5v3H9z',B),link:'<g transform="rotate(-45 9 9)">'+p('M8 6H4a3 3 0 0 0 0 6h4M10 12h4a3 3 0 0 0 0-6h-4M6 9h6',B,2)+'</g>',
dim1:dim('')+har(3,15,9),dim2:'<g transform="rotate(-45 9 9)">'+dim('')+har(3,15,9)+'</g>',dim3:dim('M9 6v6')+p('M2 9h14M6 7l-2 2 2 2M12 7l2 2-2 2','#9b1c1c',1.500),dim4:dim('M6.500 6v6M11.500 6v6')+p('M2 9h14','#9b1c1c',1.800),dim5:p('M1.500 2v14M16.500 2v14','#9b1c1c',1.200)+har(2,16,5)+har(2,10,12),
dimA:p('M2.500 2v14h14M3 15 11 5')+p('M8 6c5 0 6 4 6 8M12 11l2 4 3-3','#9b1c1c',1.400),dimR:c(7,11,5.500,G,1.500)+c(7,11,.7,K,1,K)+p('m17 1-6 6m0-4v4h4','#9b1c1c',1.600)};
I.undoX=I.undo+c(4,15,2.300,'#c8102e',1,'#c8102e');I.redoX=I.redo+c(14,15,2,L,1,L);

document.querySelectorAll('[data-bar]').forEach(bar=>{
  const flat=bar.classList.contains('tools');
  bar.innerHTML=(flat?'<i class="grip"></i>':'')+bar.dataset.bar.split(' ').map(k=>{
    if(k==='|')return '<i class="sep"></i>';
    if(k==='~')return '<i class="grip grip-next"></i>';
    const n=k.replace(/[*!]/,'');
    return `<button class="tool${k.endsWith('*')?' on':''}" aria-label="${n}"><svg width="18" height="18" viewBox="0 0 18 18">${I[n]}</svg></button>`}).join('');
});

/* tree icons, 16 x 16 */
const T={
page:p('M.5 2.500h11l4 4v7H.5z','#8a6f5c',1,'#f3e3d2')+p('M4.500 5.500h6v6h-6z','#1878b8',1.300,'#a9e0f7')+p('M3 8.500h1M11 8.500h1M7.500 4v1M7.500 12v1','#1878b8')+p('M11.500 2.500v4h4','#666'),
proj:f('M0 1h15v14H0z','#dcecf8')+p('M.5 4v11.500h14V4M5.500 5v10','#8497a8')+f('M0 1h16v4H0z',B)+f('M0 1h4v4H0z','#c8102e')+c(12,12,3.500,'#fff',.6,'#eaa94a')+p('M12 9.500v3M12 13.500v1','#000',1.700),
work:p('M.5 2.500h15v11H.5z',K,1,'#fff3c9',D)+p('M3 6.500h10M3 9.500h10','#7a6a20',1.600),
plus:p('M.5 2.500h15v11H.5z',K,1,'#a8f3ee',D)+p('M5 8h6M8 5v6','#145',1.800),
folder:f('M0 4V2h6l2 2z','#777')+f('M0 4h16v11H0z','#ecb45d'),
elec:p('M1.500 1.500h12v13h-12z',G,1.300,'#fff')+p('M4.500 3.500h6v4h-6zM4.500 8.500h6v4h-6z','#8a8a8a')+p('M6 5.500h3M6 10.500h3',B,2),
cab:p('M3.500 7V1.500h10v12h-2M6 4.500h3M10 3.500h2',G,1.100,'#fff')+f('M10 3h3v3h-3z','#d8c06a')+p('M1.500 6.500h10v9h-10z',G,1.200,'#fff')+p('M1.500 8.500h10M4 10.500h5v3H4z',G,1.100),
sym:p('M.5 1.500h15v13H.5z','#7b93a6',1,'#fff')+f('M3 3h4v4H3z',B)+c(11,7,2.200,E,1,E)+f('M2 13l3.500-4L9 13z','#d59a2f'),
bare:f('M2 2h4v4H2z',B)+c(11,7,2.200,E,1,E)+f('M1 12l3.500-4L8 12z','#d59a2f')};
function tree(id,rows){
  const dot='stroke="#9a9a9a" stroke-dasharray="1 2"';
  document.getElementById(id).innerHTML=rows.map(([lv,st,ic,tx,fl=''],i)=>{
    const more=k=>{for(let j=i+1;j<rows.length;j++){if(rows[j][0]<k)return false;if(rows[j][0]===k)return true}return false};
    let h='';
    for(let k=0;k<lv;k++)h+=`<svg class="cell" width="20" height="20">${more(k)?`<path d="M10.500 0v20" ${dot}/>`:''}</svg>`;
    h+=`<svg class="cell" width="20" height="20"><path d="M10.500 ${i||fl.includes('c')?0:10}V${more(lv)?20:10}M10 10.500h10" fill="none" ${dot}/>${st?`<rect x="6.500" y="6.500" width="8" height="8" fill="#fff" stroke="#919191"/><path d="M8 10.500h5${st==='+'?'M10.500 8v5':''}" stroke="#345"/>`:''}</svg>`;
    h+=`<svg width="20" height="16" viewBox="-2 0 20 16">${T[ic]}</svg>`;
    return `<li class="node d-flex align-items-center">${h}<span class="node-text${fl.includes('s')?' sel':''}${fl.includes('b')?' fw-bold':''}">${tx}</span></li>`}).join('');
}
tree('pages',[[1,'','page','3PLC电路','bc'],[1,'','page','4练习电路'],[1,'','page','5变频器控制电机'],[1,'','page','5变频器控制电机'],[0,'+','proj','ESS_Sample_Macros'],[0,'+','proj','ESS_Sample_Project'],[0,'-','proj','示例项目'],[1,'-','work','work1 (工艺1)'],[2,'-','plus','Power (电源柜)'],[3,'','page','1 电源分配'],[3,'','page','2 PLC输入信号'],[3,'','page','3 电机回路','bs']]);
tree('syms',[[0,'+','proj','新项目'],[0,'+','proj','ESS_Sample_Macros'],[0,'+','proj','ESS_Sample_Project'],[0,'-','proj','示例项目'],[1,'+','folder','SPECIAL'],[1,'-','folder','IEC_symbol'],[2,'-','elec','电气工程'],[3,'+','cab','端子和插头'],[3,'-','cab','线圈,触点和保护电路'],[4,'+','sym','线圈'],[4,'+','sym','常开触点'],[4,'+','sym','常闭触点'],[4,'+','sym','转换触点'],[4,'+','sym','保护电路'],[3,'+','cab','PLC/总线'],[3,'+','cab','电缆 / 天线'],[3,'-','cab','安全设备'],[4,'+','sym','熔断器'],[4,'+','sym','断路器'],[4,'+','sym','电机保护开关'],[4,'-','sym','热过载继电器','s'],[5,'+','bare','散热,6 个连接点'],[5,'+','bare','热过载继电器,可变'],[4,'+','sym','漏电电流型断路器'],[4,'+','sym','电压型漏电断路器'],[4,'+','sym','安全开关'],[3,'+','cab','传感器,开关和按钮'],[3,'+','cab','电压源和发电机'],[3,'+','cab','变频器,变压器和整流器'],[3,'+','cab','信号设备,发光和发声'],[3,'+','cab','耗电设备(电机,加热器,灯)'],[3,'+','cab','阀,闸和耦合器'],[3,'+','cab','电子和逻辑组件'],[3,'+','cab','电气工程的特殊功能'],[2,'+','elec','特殊符号'],[1,'+','folder','GRAPHICS']]);

/* relay symbols of the preview list */
const num=(x,y,t,s)=>`<text x="${x}" y="${y}" font-family="Liberation Serif" font-size="${s}" fill="#222">${t}</text>`;
const pin=(x,y,n)=>{const [a,b,c1,d]=y;return `M${x} ${a}V${b}h${n}V${c1}h-${n}V${d}`};
const Y=[20,45,60,85],Z=[27,46,58,79];
const cells=[
 `<path d="M8 36H205V69H8zM74 36v33M139 36v33${pin(41,Y,17)}${pin(107,Y,17)}${pin(172,Y,17)}"/>`+num(46,27,1,20)+num(111,27,3,20)+num(177,27,5,20)+num(46,92,2,20)+num(111,92,4,20)+num(177,92,6,20),
 `<path d="M74 36H139V69H74z${pin(107,Y,17)}"/>`+num(111,27,1,20)+num(111,92,2,20),
 `<path d="M6 39H207V65H6zM56 39v26M106 39v26${pin(31,Z,14)}${pin(81,Z,14)}${pin(132,Z,13)}${pin(182,Z,14)}"/>`+[[35,1,2],[85,3,4],[135,5,6],[186,7,8]].map(a=>num(a[0],34,a[1],17)+num(a[0],84,a[2],17)).join(''),
 `<path d="M42 36H171V68H42zM107 36v32${pin(74,Y,17)}M139 20v16M139 68v17"/>`+num(79,27,1,20)+num(144,27,3,20)+num(79,92,2,20)+num(144,92,4,20)];
document.getElementById('symbols').innerHTML=cells.map(s=>`<li><svg viewBox="0 0 213 102"><g fill="none" stroke="#0000c4" stroke-width="2" shape-rendering="crispEdges">${s.slice(0,s.indexOf('/>')+2)}</g>${s.slice(s.indexOf('/>')+2)}</svg></li>`).join('');

/* schematic sheet */
let dots='';
for(let i=0;i<130;i++)for(let j=0;j<77;j++)dots+=`M${Math.round(567+i*10.56)} ${Math.round(167+j*10.56)}.5h1`;
const X=[831.5,852.5,874.5];
const tx=(x,y,t,s=9,k='#1414b4',ff='Liberation Mono')=>`<text x="${x}" y="${y}" font-family="${ff},Noto Sans CJK SC" font-size="${s}" fill="${k}">${t}</text>`;
let g=`<g transform="translate(-566 -162)"><g fill="none" shape-rendering="crispEdges"><path d="${dots}" stroke="#222"/>
<path d="M704.500 160V823.500H1900M704.500 780.500H1900M704 791.500H969M704 802.500H969M704 812.500H1900M757.500 780v43M810.500 780v43M863.500 780v43M895.500 780v43M969.500 780v43" stroke="#000"/>
<path d="M852.500 291V444M874.500 291V444M831.500 465V528M852.500 465V528M874.500 465V528" stroke="#a01820"/>
<path d="M821.500 269.500h63v21h-63zM821.500 280.500h63M842.500 269v21M863.500 269v21M800.500 260v7M801 263.500h19M805.500 257.500h10v10h-10zM810.500 255v15M821.500 532.500h63v11h-63zM842.500 532v11M863.500 532v11${X.map(x=>`M${x} 270v3h6v5h-6v2M${x} 290v4M${x} 252v5M${x} 527v8h6v6h-6v8M${x} 442v6M${x} 461v4`).join('')}" stroke="#1414b4"/>
<path d="M821 263.500h54M821 274.500h-10.500v11h10.500" stroke="#1414b4" stroke-dasharray="6 5"/></g>
<path d="${X.map(x=>`M${x-6.500} 256 ${x} 270M${x-6.500} 447 ${x} 461M${x} 443a3 3 0 0 0 0 5`).join('')}" fill="none" stroke="#1414b4"/>
<path d="M831.500 160V969M565 537.500H1900" stroke="#777" shape-rendering="crispEdges"/>
<path d="M831.500 465V528" stroke="#a01820" shape-rendering="crispEdges"/>
<path d="M741 210.500h5" stroke="#d11"/><path d="M745 207l8 3.500-8 3.500z" fill="#d11"/>`
+tx(755,214,'N',9,'#1414b4')+tx(772,267,'-QF10')+tx(801,458,'-KM1')+tx(800,541,'-F1')
+X.map((x,i)=>tx(x+1.5,255,2*i+1,7,'#777')+tx(x+1.5,298,2*i+2,7,'#777')+tx(x-5,289,'I&gt;',8)+tx(x+1.5,445,1,7,'#777')+tx(x+1.5,466,2,7,'#777')+tx(x+1.5,530,2*i+1,7,'#777')+tx(x+1.5,550,2*i+2,7,'#777')).join('')
+tx(707,778,'2',9,'#000')
+[[866,788,'日期'],[866,799,'校对'],[866,810,'审核'],[866,820,'原始项目'],[707,820,'修改'],[760,820,'日期'],[813,820,'姓名'],[971,820,'替换'],[897,788,'2023-01-11'],[897,799,'111111']].map(a=>tx(a[0],a[1],a[2],7,'#777','Liberation Serif')).join('')
+tx(971,791,'EPLAN',9,'#000')+tx(971,810,'带 IEC 标准标识符',9,'#000')+'</g>';
document.getElementById('drawing').innerHTML=g;
document.getElementById('docs').innerHTML=['/3PLC电路','+A2&amp;EPA1/1','=work1+P...'].map((t,i)=>`<button class="d-flex align-items-center gap-2${i===2?' cur':''}"><svg width="15" height="15" viewBox="0 0 15 15"><path d="M2.500 1.500h6l4 4v8h-10z" fill="#fff" stroke="#c5c9ce"/></svg><span>${t}</span></button>`).join('');
</script>
</body>
</html>
